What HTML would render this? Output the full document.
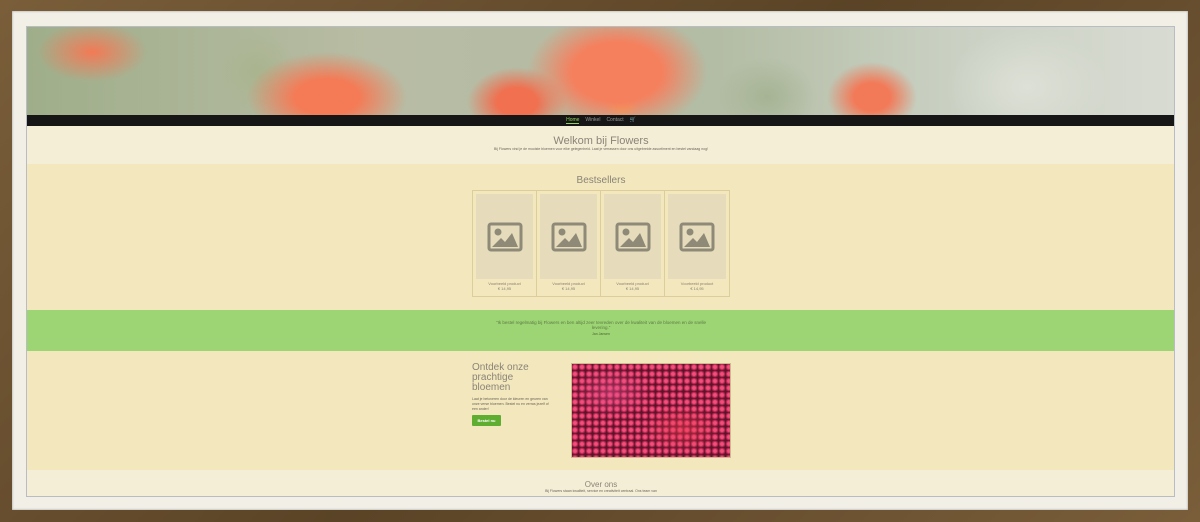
<!DOCTYPE html>
<html><head><meta charset="utf-8"><style>
*{margin:0;padding:0;box-sizing:border-box}
body{width:1200px;height:522px;overflow:hidden;background:#6b5233;font-family:"Liberation Sans",sans-serif;position:relative}
.frame{position:absolute;left:0;top:0;width:1200px;height:522px;background:linear-gradient(135deg,#7a5e3a,#5a4326 50%,#7a5e3a);}
.mat{position:absolute;left:12px;top:11px;width:1176px;height:499px;background:#f1efe6;box-shadow:inset 0 0 2px #999}
.in{position:absolute;left:26px;top:26px;width:1149px;height:471px;overflow:hidden;border:1px solid #b9bcc3;background:#f5eed6}
.hero{position:absolute;left:0;top:0;width:1148px;height:88px;background:
radial-gradient(ellipse 55px 30px at 65px 25px,#f27a55,transparent),
radial-gradient(ellipse 80px 45px at 300px 70px,#f47b56 40%,transparent),
radial-gradient(ellipse 90px 60px at 590px 45px,#f5805e 50%,transparent),
radial-gradient(ellipse 50px 35px at 490px 75px,#f07050 40%,transparent),
radial-gradient(ellipse 45px 35px at 845px 70px,#f27a58 40%,transparent),
radial-gradient(ellipse 18px 12px at 595px 78px,#f5c040,transparent),
radial-gradient(ellipse 40px 40px at 230px 45px,#aab48e,transparent),
radial-gradient(ellipse 50px 40px at 740px 70px,#a6b494,transparent),
radial-gradient(ellipse 80px 60px at 1000px 60px,#dde0d6,transparent),
linear-gradient(90deg,#9fae8a,#b8bca4 30%,#b3bca4 60%,#c9d0c2 80%,#d8dbd2)}
.nav{position:absolute;left:0;top:88px;width:1148px;height:11px;background:#161616;font-size:5px;color:#999;text-align:center;line-height:11px}
.nav span{margin:0 3px}.nav .h{color:#8fd35a;border-bottom:1px solid #8fd35a}
.s1{position:absolute;top:99px;left:0;width:1148px;height:38px;background:#f5eed6;text-align:center;color:#7a7468}
h2{font-weight:normal;color:#8a8478}
.s1 h2{font-size:11px;margin-top:9px}
.small{font-size:3.5px;color:#6a6458}
.s2{position:absolute;top:137px;left:0;width:1148px;height:146px;background:#f3e7bd}
.s2 h2{font-size:10px;text-align:center;margin-top:11px}
.cards{position:absolute;left:445px;top:26px;width:258px;height:107px;border:1px solid #dccd9a;display:flex}
.card{width:64.5px;border-right:1px solid #dccd9a;padding:3px;text-align:center}
.card:last-child{border-right:0}
.img{height:85px;background:#e6dcbc;display:flex;align-items:center;justify-content:center}
.card .t{font-size:4px;color:#8a8070;margin-top:2px}
.s3{position:absolute;top:283px;left:0;width:1148px;height:41px;background:#9dd574;text-align:center;color:#5d7a45;font-size:4.5px;padding-top:10px}
.s4{position:absolute;top:324px;left:0;width:1148px;height:119px;background:#f3e7bd}
.s4 h2{position:absolute;left:445px;top:12px;font-size:10px;line-height:10px;width:62px}
.s4 p{position:absolute;left:445px;top:46px;width:80px;font-size:3.5px;color:#6a6458;line-height:5px}
.btn{position:absolute;left:445px;top:64px;width:29px;height:11px;background:#5fae32;color:#fff;font-size:4px;line-height:11px;text-align:center;font-weight:bold;border-radius:1px}
.photo{position:absolute;left:544px;top:12px;width:160px;height:95px;border:1px solid #c9bd90;background:
radial-gradient(circle at 50% 50%,rgba(255,90,120,.0) 0,transparent 1px),
radial-gradient(ellipse 40px 25px at 25% 30%,rgba(230,80,140,.5),transparent),
radial-gradient(ellipse 40px 25px at 70% 70%,rgba(240,60,80,.5),transparent),
radial-gradient(circle at 3px 3px,#f0507a 1.5px,#c02858 2.5px,#5a1428 4px),#8a2040;
background-size:auto,auto,auto,7px 7px,auto}
.s5{position:absolute;top:443px;left:0;width:1148px;height:30px;background:#f5eed6;text-align:center}
.s5 h2{font-size:8px;margin-top:10px}
</style></head><body>
<div class="frame"></div><div class="mat"></div>
<div class="in">
<div class="hero"></div>
<div class="nav"><span class="h">Home</span><span>Winkel</span><span>Contact</span><span>🛒</span></div>
<div class="s1"><h2>Welkom bij Flowers</h2><div class="small">Bij Flowers vind je de mooiste bloemen voor elke gelegenheid. Laat je verrassen door ons uitgebreide assortiment en bestel vandaag nog!</div></div>
<div class="s2"><h2>Bestsellers</h2>
<div class="cards">
<div class="card"><div class="img"><svg width="36" height="30" viewBox="0 0 36 30"><rect x="2" y="2" width="32" height="26" rx="2" fill="none" stroke="#8f8a78" stroke-width="3"/><circle cx="11" cy="10" r="3.5" fill="#8f8a78"/><path d="M5 25 L14 16 L18 20 L25 11 L31 25 Z" fill="#8f8a78"/></svg></div><div class="t">Voorbeeld product<br>€ 14,95</div></div>
<div class="card"><div class="img"><svg width="36" height="30" viewBox="0 0 36 30"><rect x="2" y="2" width="32" height="26" rx="2" fill="none" stroke="#8f8a78" stroke-width="3"/><circle cx="11" cy="10" r="3.5" fill="#8f8a78"/><path d="M5 25 L14 16 L18 20 L25 11 L31 25 Z" fill="#8f8a78"/></svg></div><div class="t">Voorbeeld product<br>€ 14,95</div></div>
<div class="card"><div class="img"><svg width="36" height="30" viewBox="0 0 36 30"><rect x="2" y="2" width="32" height="26" rx="2" fill="none" stroke="#8f8a78" stroke-width="3"/><circle cx="11" cy="10" r="3.5" fill="#8f8a78"/><path d="M5 25 L14 16 L18 20 L25 11 L31 25 Z" fill="#8f8a78"/></svg></div><div class="t">Voorbeeld product<br>€ 14,95</div></div>
<div class="card"><div class="img"><svg width="36" height="30" viewBox="0 0 36 30"><rect x="2" y="2" width="32" height="26" rx="2" fill="none" stroke="#8f8a78" stroke-width="3"/><circle cx="11" cy="10" r="3.5" fill="#8f8a78"/><path d="M5 25 L14 16 L18 20 L25 11 L31 25 Z" fill="#8f8a78"/></svg></div><div class="t">Voorbeeld product<br>€ 14,95</div></div>
</div></div>
<div class="s3">"Ik bestel regelmatig bij Flowers en ben altijd zeer tevreden over de kwaliteit van de bloemen en de snelle<br>levering."<div style="font-size:3.5px;margin-top:2px;color:#4a6035">Jan Jansen</div></div>
<div class="s4"><h2>Ontdek onze prachtige bloemen</h2><p>Laat je betoveren door de kleuren en geuren van onze verse bloemen. Bestel nu en verras jezelf of een ander!</p><div class="btn">Bestel nu</div><div class="photo"></div></div>
<div class="s5"><h2>Over ons</h2><div class="small">Bij Flowers staan kwaliteit, service en creativiteit centraal. Ons team van</div></div>
</div>
</body></html>
